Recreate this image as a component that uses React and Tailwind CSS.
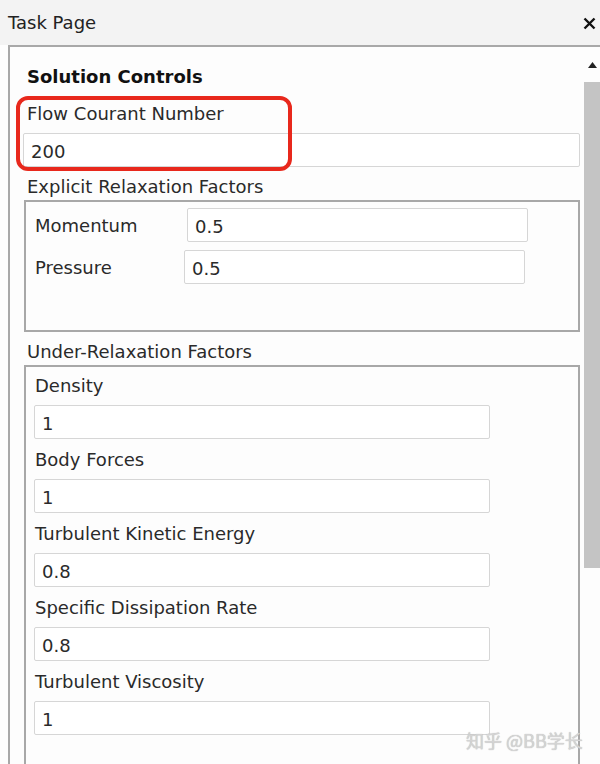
import React from 'react';

const font = "font-['DejaVu_Sans',sans-serif]";

const Field = ({ value, className = '' }) => (
    <div className={`h-[34px] bg-white border border-[#d6d6d6] rounded-[2px] flex items-center pl-[7px] pt-[2px] text-[#2a2a2a] ${className}`}>
        {value}
    </div>
);

const Label = ({ children, className = '' }) => (
    <div className={`h-[24px] leading-[24px] text-[#2a2a2a] ${className}`}>{children}</div>
);

const under = [
    ['Density', '1'],
    ['Body Forces', '1'],
    ['Turbulent Kinetic Energy', '0.8'],
    ['Specific Dissipation Rate', '0.8'],
    ['Turbulent Viscosity', '1'],
];

export default function App() {
    return (
        <div className={`relative w-[600px] h-[764px] overflow-hidden bg-[#fdfdfd] text-[18px] ${font}`}>
            {/* Title bar */}
            <div className="h-[45px] flex items-center justify-between pl-[8px] pr-[4px] bg-[#f3f3f3] text-[#222]">
                <span className="text-[18px]">Task Page</span>
                <svg width="13" height="13" viewBox="0 0 13 13" className="mt-[2px]">
                    <path d="M1.5 1.5 L11.5 11.5 M11.5 1.5 L1.5 11.5" stroke="#111" strokeWidth="2.4" />
                </svg>
            </div>

            {/* Panel */}
            <div className="ml-[8px] h-[719px] border-l-2 border-t-2 border-[#a8a8a8] flex">
                <div className="flex-1 pl-[14px] pr-[4px]">
                    <Label className="mt-[18px] pl-[3px] font-bold text-[#111]">Solution Controls</Label>
                    <Label className="mt-[13px] pl-[3px]">Flow Courant Number</Label>
                    <Field value="200" className="mt-[7px] -ml-[1px]" />

                    <Label className="mt-[8px] pl-[3px]">Explicit Relaxation Factors</Label>
                    <div className="mt-[1px] h-[132px] border-2 border-[#a8a8a8] pt-[6px] pr-[50px]">
                        <div className="flex items-center">
                            <span className="w-[161px] pl-[9px] text-[#2a2a2a]">Momentum</span>
                            <Field value="0.5" className="flex-1" />
                        </div>
                        <div className="flex items-center mt-[8px] mr-[3px]">
                            <span className="w-[158px] pl-[9px] text-[#2a2a2a]">Pressure</span>
                            <Field value="0.5" className="flex-1" />
                        </div>
                    </div>

                    <Label className="mt-[8px] pl-[3px]">Under-Relaxation Factors</Label>
                    <div className="mt-[1px] h-[420px] border-2 border-[#a8a8a8] border-b-0 pl-[8px] pr-[88px] pt-[7px]">
                        {under.map(([name, value], i) => (
                            <div key={name} className={i > 0 ? 'mt-[9px]' : ''}>
                                <Label className="pl-[1px]">{name}</Label>
                                <Field value={value} className="mt-[7px]" />
                            </div>
                        ))}
                    </div>
                </div>

                {/* Scrollbar */}
                <div className="w-[16px] flex flex-col">
                    <div className="h-[35px] flex items-center justify-center">
                        <svg width="9" height="6" viewBox="0 0 9 6"><path d="M4.5 0 L9 6 L0 6 Z" fill="#222" /></svg>
                    </div>
                    <div className="h-[486px] bg-[#c4c4c4]" />
                </div>
            </div>

            {/* Highlight annotation */}
            <div className="absolute left-[16px] top-[96px] w-[276px] h-[75px] border-[4px] border-[#e8281c] rounded-[12px]" />

            {/* Watermark */}
            <div className="absolute left-[466px] top-[727px] text-[18px] text-[#d4d4d4] font-['Noto_Sans_CJK_SC',sans-serif] [text-shadow:0_0_1px_#b0b0b0]">
                知乎 @BB学长
            </div>
        </div>
    );
}
